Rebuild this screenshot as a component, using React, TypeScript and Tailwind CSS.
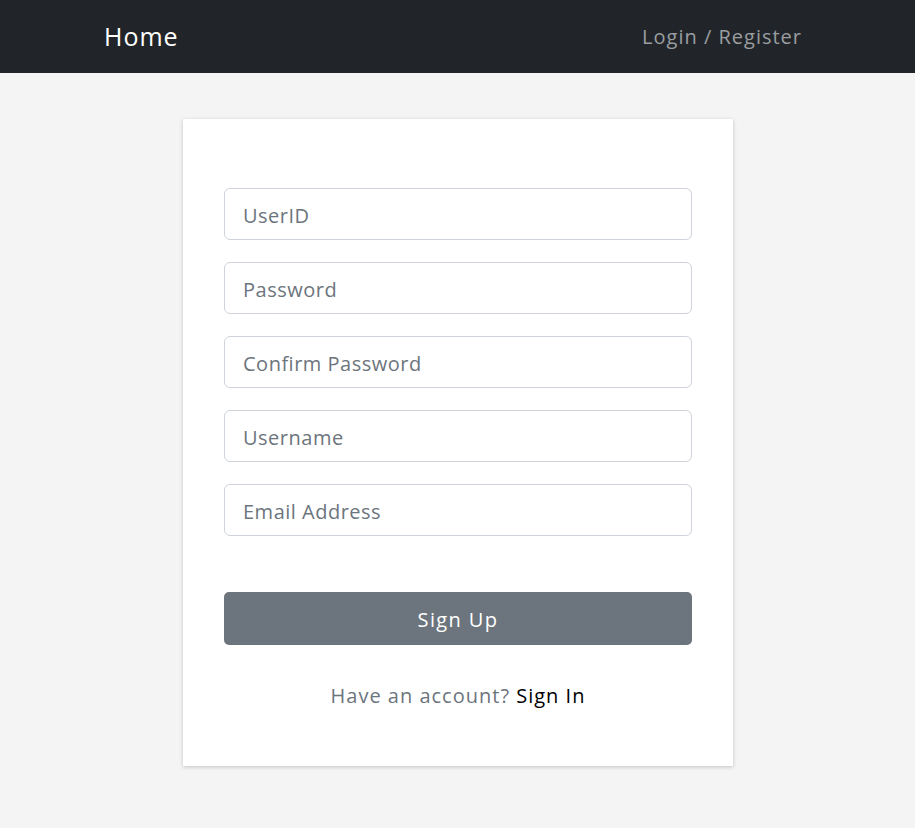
import React from "react";

const fields = ["UserID", "Password", "Confirm Password", "Username", "Email Address"];

export default function App() {
  return (
    <div
      className="min-h-[828px] bg-[#f4f4f4]"
      style={{ fontFamily: '"Open Sans", "Noto Sans CJK KR", sans-serif' }}
    >
      <nav className="h-[73px] bg-[#212529] flex items-center justify-between pl-[104px] pr-[113px]">
        <a className="text-white text-[25px] leading-none tracking-[1px]">Home</a>
        <a className="text-[#9a9da0] text-[20px] leading-none tracking-[1px]">Login / Register</a>
      </nav>
      <div className="flex justify-center pt-[46px] pl-[1px]">
        <div className="w-[550px] bg-white shadow-[0_1px_4px_rgba(0,0,0,0.2)] px-[41px] pt-[69px] pb-[56px]">
          <form className="flex flex-col gap-[22px]">
            {fields.map((f) => (
              <input
                key={f}
                type={f.includes("Password") ? "password" : "text"}
                placeholder={f}
                className="h-[52px] w-full rounded-[6px] border border-[#ced4da] px-[18px] pt-[2px] text-[20px] tracking-[0.5px] placeholder:text-[#6c757d] outline-none"
              />
            ))}
          </form>
          <button
            type="button"
            className="mt-[56px] h-[53px] w-full rounded-[5px] bg-[#6c757d] text-white text-[20px] tracking-[1.4px] pt-[2px]"
          >
            Sign Up
          </button>
          <p className="mt-[37px] text-center text-[20px] text-[#6c757d] leading-[28px] tracking-[1px]">
            Have an account? <a className="text-black">Sign In</a>
          </p>
        </div>
      </div>
    </div>
  );
}
